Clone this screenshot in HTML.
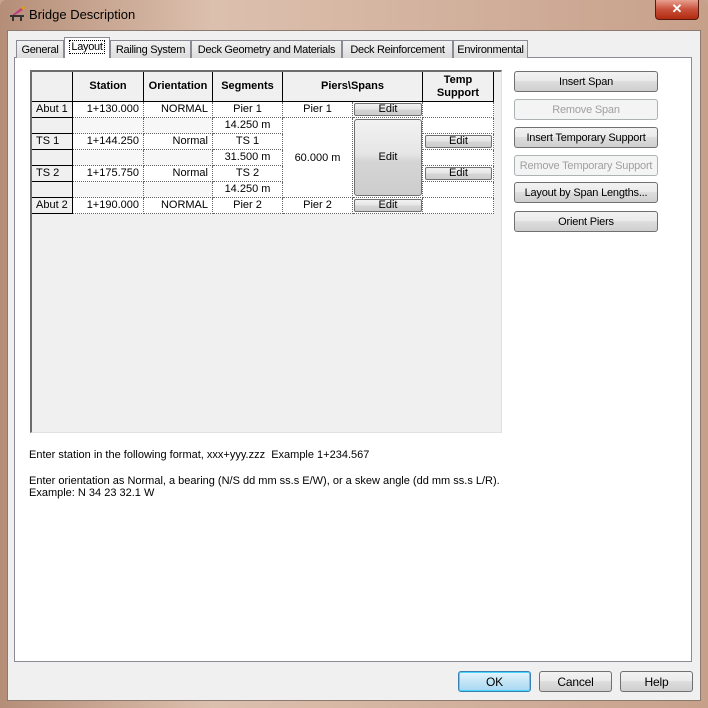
<!DOCTYPE html>
<html><head><meta charset="utf-8"><style>
*{margin:0;padding:0;box-sizing:border-box}
body{width:708px;height:708px;overflow:hidden;font-family:"Liberation Sans",sans-serif;font-size:11px;color:#000;background:#c9a590;position:relative}
.a{position:absolute}
.frame{left:0;top:0;width:708px;height:708px;background:linear-gradient(90deg,#b58e78,#dcc0ae 30%,#d3b39f 60%,#c7a08a);border-radius:6px 6px 0 0}
.client{left:7px;top:30px;width:694px;height:671px;background:#f0f0f0;border:1px solid #8a7a70}
.panel{left:14px;top:57px;width:678px;height:605px;background:#fff;border:1px solid #898c95}
.tab{top:40px;height:18px;background:linear-gradient(#f2f2f2,#dcdcdc);border:1px solid #898c95;border-bottom:none;padding-top:3px;text-align:center;white-space:nowrap;letter-spacing:-0.3px;overflow:hidden}
.grid{left:30px;top:70px;width:472px;height:363px;background:#f0f0f0;border-left:2px solid #6d6d6d;border-top:2px solid #6d6d6d;border-right:1px solid #e0e0e0;border-bottom:1px solid #e0e0e0}
.c{position:absolute;height:16px;line-height:15px;text-align:center;background:#fff;border-right:1px dotted #666;border-bottom:1px dotted #666;white-space:nowrap}
.h{position:absolute;background:#f0f0f0;border-right:1px solid #000;border-bottom:1px solid #000;text-align:center;font-weight:bold;display:flex;align-items:center;justify-content:center;line-height:13px}
.r{position:absolute;background:#f0f0f0;border-right:1px solid #000;border-bottom:1px solid #000;height:16px;line-height:15px;padding-left:4px}
.btn{position:absolute;border:1px solid #707070;border-radius:3px;background:linear-gradient(#f2f2f2 0,#ebebeb 45%,#dddddd 50%,#cfcfcf 100%);text-align:center;font-size:11px;letter-spacing:-0.2px;white-space:nowrap;display:flex;align-items:center;justify-content:center}
.dis{color:#a0a0a0;border-color:#adb2b5;background:#f4f4f4}
.eb{position:absolute;border:1px solid #707070;border-radius:2px;background:linear-gradient(#f2f2f2,#e6e6e6 45%,#d5d5d5 55%,#cdcdcd);text-align:center;line-height:11px;font-size:11px}
</style></head><body>
<div class="a frame"></div>
<div class="a" style="left:9px;top:6px;width:16px;height:16px">
<svg width="16" height="16"><rect x="1" y="9" width="14" height="2" fill="#333"/><rect x="3" y="11" width="2" height="4" fill="#333"/><rect x="11" y="11" width="2" height="4" fill="#333"/><path d="M3 9 L12 2 L14 4 L6 9Z" fill="#c04080"/><path d="M12 2 L14 0 L16 2 L14 4Z" fill="#e0a000"/></svg></div>
<div class="a" style="left:29px;top:7px;font-size:13px">Bridge Description</div>
<div class="a" style="left:655px;top:0;width:44px;height:20px;border:1px solid #5a1a10;border-top:none;border-radius:0 0 4px 4px;background:linear-gradient(#e8a090,#c8503a 50%,#b02a10);color:#fff;font-weight:bold;font-size:13px;text-align:center;line-height:18px">✕</div>
<div class="a client"></div>
<div class="a panel"></div>
<div class="a tab" style="left:16px;width:48px">General</div>
<div class="a tab" style="left:64px;width:46px;top:37px;height:21px;background:#fff;z-index:2"><span style="border:1px dotted #000;padding:0 1px">Layout</span></div>
<div class="a tab" style="left:110px;width:81px">Railing System</div>
<div class="a tab" style="left:191px;width:151px">Deck Geometry and Materials</div>
<div class="a tab" style="left:342px;width:111px">Deck Reinforcement</div>
<div class="a tab" style="left:453px;width:75px">Environmental</div>

<div class="a grid">
<div class="h" style="left:0;top:0;width:41px;height:30px"></div>
<div class="h" style="left:41px;top:0;width:71px;height:30px">Station</div>
<div class="h" style="left:112px;top:0;width:69px;height:30px">Orientation</div>
<div class="h" style="left:181px;top:0;width:70px;height:30px">Segments</div>
<div class="h" style="left:251px;top:0;width:140px;height:30px">Piers\Spans</div>
<div class="h" style="left:391px;top:0;width:71px;height:30px">Temp<br>Support</div>

<div class="r" style="left:0;top:30px;width:41px">Abut 1</div>
<div class="r" style="left:0;top:46px;width:41px"></div>
<div class="r" style="left:0;top:62px;width:41px">TS 1</div>
<div class="r" style="left:0;top:78px;width:41px"></div>
<div class="r" style="left:0;top:94px;width:41px">TS 2</div>
<div class="r" style="left:0;top:110px;width:41px"></div>
<div class="r" style="left:0;top:126px;width:41px">Abut 2</div>

<div class="c" style="left:41px;top:30px;width:71px;text-align:right;padding-right:4px">1+130.000</div>
<div class="c" style="left:41px;top:46px;width:71px;background:#f7f7f7"></div>
<div class="c" style="left:41px;top:62px;width:71px;text-align:right;padding-right:4px">1+144.250</div>
<div class="c" style="left:41px;top:78px;width:71px;background:#f7f7f7"></div>
<div class="c" style="left:41px;top:94px;width:71px;text-align:right;padding-right:4px">1+175.750</div>
<div class="c" style="left:41px;top:110px;width:71px;background:#f7f7f7"></div>
<div class="c" style="left:41px;top:126px;width:71px;text-align:right;padding-right:4px">1+190.000</div>

<div class="c" style="left:112px;top:30px;width:69px;text-align:right;padding-right:4px">NORMAL</div>
<div class="c" style="left:112px;top:46px;width:69px;background:#f7f7f7"></div>
<div class="c" style="left:112px;top:62px;width:69px;text-align:right;padding-right:4px">Normal</div>
<div class="c" style="left:112px;top:78px;width:69px;background:#f7f7f7"></div>
<div class="c" style="left:112px;top:94px;width:69px;text-align:right;padding-right:4px">Normal</div>
<div class="c" style="left:112px;top:110px;width:69px;background:#f7f7f7"></div>
<div class="c" style="left:112px;top:126px;width:69px;text-align:right;padding-right:4px">NORMAL</div>

<div class="c" style="left:181px;top:30px;width:70px">Pier 1</div>
<div class="c" style="left:181px;top:46px;width:70px">14.250 m</div>
<div class="c" style="left:181px;top:62px;width:70px">TS 1</div>
<div class="c" style="left:181px;top:78px;width:70px">31.500 m</div>
<div class="c" style="left:181px;top:94px;width:70px">TS 2</div>
<div class="c" style="left:181px;top:110px;width:70px">14.250 m</div>
<div class="c" style="left:181px;top:126px;width:70px">Pier 2</div>

<div class="c" style="left:251px;top:30px;width:70px">Pier 1</div>
<div class="c" style="left:251px;top:46px;width:70px;height:80px;line-height:80px">60.000 m</div>
<div class="c" style="left:251px;top:126px;width:70px">Pier 2</div>
<div class="c" style="left:321px;top:30px;width:70px"></div>
<div class="c" style="left:321px;top:46px;width:70px;height:80px"></div>
<div class="c" style="left:321px;top:126px;width:70px"></div>
<div class="eb" style="left:322px;top:31px;width:68px;height:13px">Edit</div>
<div class="eb" style="left:322px;top:47px;width:68px;height:77px;line-height:75px;border-radius:3px">Edit</div>
<div class="eb" style="left:322px;top:127px;width:68px;height:13px">Edit</div>

<div class="c" style="left:391px;top:30px;width:71px"></div>
<div class="c" style="left:391px;top:46px;width:71px"></div>
<div class="c" style="left:391px;top:62px;width:71px"></div>
<div class="c" style="left:391px;top:78px;width:71px"></div>
<div class="c" style="left:391px;top:94px;width:71px"></div>
<div class="c" style="left:391px;top:110px;width:71px"></div>
<div class="c" style="left:391px;top:126px;width:71px"></div>
<div class="eb" style="left:393px;top:63px;width:67px;height:13px">Edit</div>
<div class="eb" style="left:393px;top:95px;width:67px;height:13px">Edit</div>
</div>

<div class="btn" style="left:514px;top:71px;width:144px;height:21px">Insert Span</div>
<div class="btn dis" style="left:514px;top:99px;width:144px;height:21px">Remove Span</div>
<div class="btn" style="left:514px;top:127px;width:144px;height:21px">Insert Temporary Support</div>
<div class="btn dis" style="left:514px;top:155px;width:144px;height:21px">Remove Temporary Support</div>
<div class="btn" style="left:514px;top:182px;width:144px;height:21px">Layout by Span Lengths...</div>
<div class="btn" style="left:514px;top:211px;width:144px;height:21px">Orient Piers</div>

<div class="a" style="left:29px;top:449px;font-size:11px">Enter station in the following format, xxx+yyy.zzz &nbsp;Example 1+234.567</div>
<div class="a" style="left:29px;top:475px;font-size:11px;line-height:12px">Enter orientation as Normal, a bearing (N/S dd mm ss.s E/W), or a skew angle (dd mm ss.s L/R).<br>Example: N 34 23 32.1 W</div>

<div class="btn" style="left:458px;top:671px;width:73px;height:21px;font-size:12px;border-color:#3c7fb1;background:linear-gradient(#e5f4fc,#c4e5f6 50%,#a8d8f2);box-shadow:inset 0 0 0 1px #48d4fb">OK</div>
<div class="btn" style="left:539px;top:671px;width:73px;height:21px;font-size:12px">Cancel</div>
<div class="btn" style="left:620px;top:671px;width:73px;height:21px;font-size:12px">Help</div>
</body></html>
